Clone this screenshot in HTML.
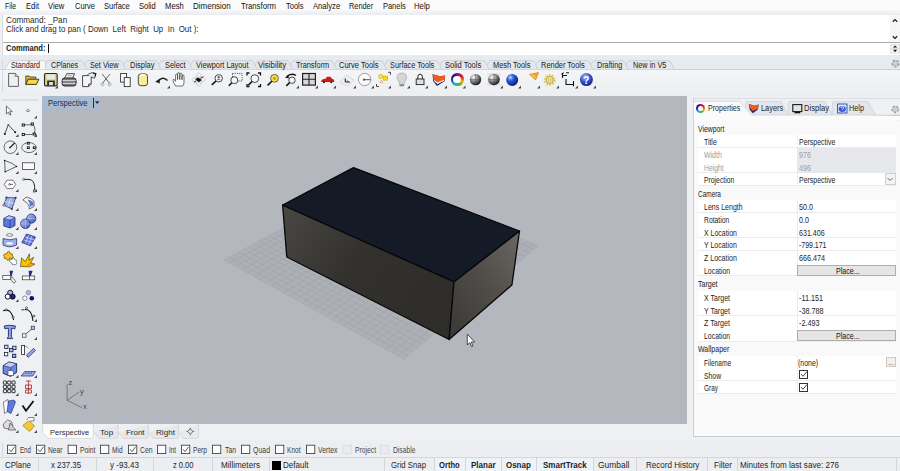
<!DOCTYPE html><html><head><meta charset="utf-8"><style>
html,body{margin:0;padding:0;width:900px;height:471px;overflow:hidden;background:#eef0f3}
body{position:relative;font-family:"Liberation Sans",sans-serif}
body>div{position:absolute}
.t{position:absolute;white-space:pre;line-height:1;font-family:"Liberation Sans",sans-serif}
svg{overflow:visible}
</style></head><body>
<div style="left:0px;top:0px;width:900px;height:11px;background:#fbfbfc;"></div>
<div style="left:0px;top:10px;width:900px;height:5px;background:linear-gradient(#f7f8f9,#e9ebee);"></div>
<span class="t" style="left:5.00px;top:1.59px;font-size:8.6px;color:#111;font-weight:400;transform:scaleX(0.7945);transform-origin:0 0;">File</span>
<span class="t" style="left:25.75px;top:1.59px;font-size:8.6px;color:#111;font-weight:400;transform:scaleX(0.8763);transform-origin:0 0;">Edit</span>
<span class="t" style="left:48.25px;top:1.59px;font-size:8.6px;color:#111;font-weight:400;transform:scaleX(0.8789);transform-origin:0 0;">View</span>
<span class="t" style="left:74.50px;top:1.59px;font-size:8.6px;color:#111;font-weight:400;transform:scaleX(0.8710);transform-origin:0 0;">Curve</span>
<span class="t" style="left:103.75px;top:1.59px;font-size:8.6px;color:#111;font-weight:400;transform:scaleX(0.8691);transform-origin:0 0;">Surface</span>
<span class="t" style="left:138.75px;top:1.59px;font-size:8.6px;color:#111;font-weight:400;transform:scaleX(0.8754);transform-origin:0 0;">Solid</span>
<span class="t" style="left:165.00px;top:1.59px;font-size:8.6px;color:#111;font-weight:400;transform:scaleX(0.8917);transform-origin:0 0;">Mesh</span>
<span class="t" style="left:193.30px;top:1.59px;font-size:8.6px;color:#111;font-weight:400;transform:scaleX(0.9302);transform-origin:0 0;">Dimension</span>
<span class="t" style="left:240.50px;top:1.59px;font-size:8.6px;color:#111;font-weight:400;transform:scaleX(0.9004);transform-origin:0 0;">Transform</span>
<span class="t" style="left:285.80px;top:1.59px;font-size:8.6px;color:#111;font-weight:400;transform:scaleX(0.8715);transform-origin:0 0;">Tools</span>
<span class="t" style="left:312.80px;top:1.59px;font-size:8.6px;color:#111;font-weight:400;transform:scaleX(0.8884);transform-origin:0 0;">Analyze</span>
<span class="t" style="left:349.20px;top:1.59px;font-size:8.6px;color:#111;font-weight:400;transform:scaleX(0.8544);transform-origin:0 0;">Render</span>
<span class="t" style="left:382.50px;top:1.59px;font-size:8.6px;color:#111;font-weight:400;transform:scaleX(0.8664);transform-origin:0 0;">Panels</span>
<span class="t" style="left:414.40px;top:1.59px;font-size:8.6px;color:#111;font-weight:400;transform:scaleX(0.8997);transform-origin:0 0;">Help</span>
<div style="left:2.2px;top:14.6px;width:897.8px;height:40.2px;background:#ffffff;border-left:1px solid #d8dbdf;box-sizing:border-box"></div>
<div style="left:3px;top:41.6px;width:897px;height:1px;background:#a9abae;"></div>
<span class="t" style="left:5.80px;top:15.52px;font-size:8.8px;color:#2a2a2a;font-weight:400;transform:scaleX(0.9267);transform-origin:0 0;">Command: _Pan</span>
<span class="t" style="left:5.80px;top:24.92px;font-size:8.8px;color:#2a2a2a;font-weight:400;transform:scaleX(0.9010);transform-origin:0 0;">Click and drag to pan ( Down&nbsp; Left&nbsp; Right&nbsp; Up&nbsp; In&nbsp; Out ):</span>
<span class="t" style="left:5.80px;top:43.82px;font-size:8.8px;color:#1a1a1a;font-weight:700;transform:scaleX(0.8599);transform-origin:0 0;">Command:</span>
<div style="left:48.3px;top:44px;width:0.9px;height:9px;background:#111;"></div>
<div style="left:890px;top:14.6px;width:10px;height:27px;background:#f6f6f6;"></div>
<svg style="position:absolute;left:890px;top:14px" width="10" height="42"><path d="M2.8 7.8 L5 5.6 L7.2 7.8" stroke="#222" stroke-width="1.3" fill="none"/><path d="M2.8 22.2 L5 24.4 L7.2 22.2" stroke="#222" stroke-width="1.3" fill="none"/><rect x="0.8" y="30.2" width="8.6" height="8.8" fill="#f2f2f2" stroke="#cfcfcf" stroke-width="0.6"/><path d="M0.8 34.6 H9.4" stroke="#cfcfcf" stroke-width="0.6"/><path d="M3 33.6 L5.1 31.4 L7.2 33.6 Z M3 35.8 L5.1 38 L7.2 35.8 Z" fill="#111"/></svg>
<div style="left:0px;top:54.8px;width:900px;height:41.5px;background:#eef0f3;"></div>
<div style="left:0px;top:55.2px;width:900px;height:14px;background:#e7eaee;"></div>
<div style="left:0px;top:69px;width:900px;height:0.8px;background:#cdd1d6;"></div>
<div style="left:0px;top:69.8px;width:900px;height:26.5px;background:linear-gradient(#f3f5f7,#eceef1);"></div>
<div style="left:2px;top:59px;width:1px;height:33px;background:#d5d9de;"></div>
<svg style="position:absolute;left:0;top:54px" width="900" height="17"><path d="M623.7 15.299999999999997 L628.7 6.700000000000003 L668.7 6.700000000000003 Q670.2 6.700000000000003 670.9000000000001 8.200000000000003 L674.2 15.299999999999997" fill="#e4e7eb" stroke="#c3c7cc" stroke-width="0.7"/><path d="M588.25 15.299999999999997 L593.25 6.700000000000003 L622.7 6.700000000000003 Q624.2 6.700000000000003 624.9000000000001 8.200000000000003 L628.2 15.299999999999997" fill="#e4e7eb" stroke="#c3c7cc" stroke-width="0.7"/><path d="M533.25 15.299999999999997 L538.25 6.700000000000003 L587.25 6.700000000000003 Q588.75 6.700000000000003 589.45 8.200000000000003 L592.75 15.299999999999997" fill="#e4e7eb" stroke="#c3c7cc" stroke-width="0.7"/><path d="M484.5 15.299999999999997 L489.5 6.700000000000003 L532.25 6.700000000000003 Q533.75 6.700000000000003 534.45 8.200000000000003 L537.75 15.299999999999997" fill="#e4e7eb" stroke="#c3c7cc" stroke-width="0.7"/><path d="M437.5 15.299999999999997 L442.5 6.700000000000003 L483.5 6.700000000000003 Q485.0 6.700000000000003 485.7 8.200000000000003 L489.0 15.299999999999997" fill="#e4e7eb" stroke="#c3c7cc" stroke-width="0.7"/><path d="M382 15.299999999999997 L387 6.700000000000003 L436.5 6.700000000000003 Q438.0 6.700000000000003 438.7 8.200000000000003 L442.0 15.299999999999997" fill="#e4e7eb" stroke="#c3c7cc" stroke-width="0.7"/><path d="M332 15.299999999999997 L337 6.700000000000003 L381 6.700000000000003 Q382.5 6.700000000000003 383.2 8.200000000000003 L386.5 15.299999999999997" fill="#e4e7eb" stroke="#c3c7cc" stroke-width="0.7"/><path d="M288 15.299999999999997 L293 6.700000000000003 L331 6.700000000000003 Q332.5 6.700000000000003 333.2 8.200000000000003 L336.5 15.299999999999997" fill="#e4e7eb" stroke="#c3c7cc" stroke-width="0.7"/><path d="M252.5 15.299999999999997 L257.5 6.700000000000003 L287 6.700000000000003 Q288.5 6.700000000000003 289.2 8.200000000000003 L292.5 15.299999999999997" fill="#e4e7eb" stroke="#c3c7cc" stroke-width="0.7"/><path d="M188 15.299999999999997 L193 6.700000000000003 L251.5 6.700000000000003 Q253.0 6.700000000000003 253.7 8.200000000000003 L257.0 15.299999999999997" fill="#e4e7eb" stroke="#c3c7cc" stroke-width="0.7"/><path d="M156 15.299999999999997 L161 6.700000000000003 L187 6.700000000000003 Q188.5 6.700000000000003 189.2 8.200000000000003 L192.5 15.299999999999997" fill="#e4e7eb" stroke="#c3c7cc" stroke-width="0.7"/><path d="M121 15.299999999999997 L126 6.700000000000003 L155 6.700000000000003 Q156.5 6.700000000000003 157.2 8.200000000000003 L160.5 15.299999999999997" fill="#e4e7eb" stroke="#c3c7cc" stroke-width="0.7"/><path d="M82 15.299999999999997 L87 6.700000000000003 L120 6.700000000000003 Q121.5 6.700000000000003 122.2 8.200000000000003 L125.5 15.299999999999997" fill="#e4e7eb" stroke="#c3c7cc" stroke-width="0.7"/><path d="M42.5 15.299999999999997 L47.5 6.700000000000003 L81 6.700000000000003 Q82.5 6.700000000000003 83.2 8.200000000000003 L86.5 15.299999999999997" fill="#e4e7eb" stroke="#c3c7cc" stroke-width="0.7"/><path d="M5 15.299999999999997 L10 6.700000000000003 L43.5 6.700000000000003 Q45.5 6.700000000000003 45.5 8.5 L45.5 15.299999999999997" fill="#f7f8f9" stroke="#c3c7cc" stroke-width="0.7"/></svg>
<span class="t" style="left:10.50px;top:60.85px;font-size:8.3px;color:#1a1a1a;font-weight:400;transform:scaleX(0.8606);transform-origin:0 0;">Standard</span>
<span class="t" style="left:51.00px;top:60.85px;font-size:8.3px;color:#1a1a1a;font-weight:400;transform:scaleX(0.8606);transform-origin:0 0;">CPlanes</span>
<span class="t" style="left:89.50px;top:60.85px;font-size:8.3px;color:#1a1a1a;font-weight:400;transform:scaleX(0.8737);transform-origin:0 0;">Set View</span>
<span class="t" style="left:129.50px;top:60.85px;font-size:8.3px;color:#1a1a1a;font-weight:400;transform:scaleX(0.8999);transform-origin:0 0;">Display</span>
<span class="t" style="left:165.00px;top:60.85px;font-size:8.3px;color:#1a1a1a;font-weight:400;transform:scaleX(0.8884);transform-origin:0 0;">Select</span>
<span class="t" style="left:196.25px;top:60.85px;font-size:8.3px;color:#1a1a1a;font-weight:400;transform:scaleX(0.8840);transform-origin:0 0;">Viewport Layout</span>
<span class="t" style="left:258.00px;top:60.85px;font-size:8.3px;color:#1a1a1a;font-weight:400;transform:scaleX(0.9468);transform-origin:0 0;">Visibility</span>
<span class="t" style="left:295.50px;top:60.85px;font-size:8.3px;color:#1a1a1a;font-weight:400;transform:scaleX(0.8863);transform-origin:0 0;">Transform</span>
<span class="t" style="left:339.25px;top:60.85px;font-size:8.3px;color:#1a1a1a;font-weight:400;transform:scaleX(0.9048);transform-origin:0 0;">Curve Tools</span>
<span class="t" style="left:389.50px;top:60.85px;font-size:8.3px;color:#1a1a1a;font-weight:400;transform:scaleX(0.8827);transform-origin:0 0;">Surface Tools</span>
<span class="t" style="left:445.00px;top:60.85px;font-size:8.3px;color:#1a1a1a;font-weight:400;transform:scaleX(0.9061);transform-origin:0 0;">Solid Tools</span>
<span class="t" style="left:492.50px;top:60.85px;font-size:8.3px;color:#1a1a1a;font-weight:400;transform:scaleX(0.8964);transform-origin:0 0;">Mesh Tools</span>
<span class="t" style="left:541.25px;top:60.85px;font-size:8.3px;color:#1a1a1a;font-weight:400;transform:scaleX(0.8972);transform-origin:0 0;">Render Tools</span>
<span class="t" style="left:596.70px;top:60.85px;font-size:8.3px;color:#1a1a1a;font-weight:400;transform:scaleX(0.8709);transform-origin:0 0;">Drafting</span>
<span class="t" style="left:633.30px;top:60.85px;font-size:8.3px;color:#1a1a1a;font-weight:400;transform:scaleX(0.8825);transform-origin:0 0;">New in V5</span>
<svg style="position:absolute;left:890.0px;top:58.0px" width="11.0" height="11.0"><g transform="translate(5.5,5.5)"><circle r="3.2399999999999998" fill="none" stroke="#9a9ea4" stroke-width="1.71" stroke-dasharray="2.025 2.025"/><circle r="2.79" fill="none" stroke="#9a9ea4" stroke-width="0.7"/><circle r="1.125" fill="none" stroke="#9a9ea4" stroke-width="0.7"/></g></svg>
<svg style="position:absolute;left:0;top:0" width="900" height="96"><defs><radialGradient id="gs" cx="0.35" cy="0.3" r="0.75"><stop offset="0" stop-color="#ffffff"/><stop offset="0.45" stop-color="#8a8a8a"/><stop offset="1" stop-color="#101010"/></radialGradient><radialGradient id="bs" cx="0.35" cy="0.3" r="0.75"><stop offset="0" stop-color="#c8d8ff"/><stop offset="0.35" stop-color="#2f5fe0"/><stop offset="1" stop-color="#06186a"/></radialGradient><radialGradient id="hs" cx="0.4" cy="0.3" r="0.8"><stop offset="0" stop-color="#a8c0ff"/><stop offset="0.5" stop-color="#3050c8"/><stop offset="1" stop-color="#101c70"/></radialGradient></defs><path d="M8.6 73.4 H15.3 L18.4 76.5 V86.4 H8.6 Z" fill="#efefef" stroke="#555" stroke-width="0.9"/><path d="M15.3 73.4 V76.5 H18.4" fill="#ddd" stroke="#555" stroke-width="0.7"/><path d="M25.8 84.4 V76 H29.3 L30.3 77 H35.8 V79.2" fill="#d9b830" stroke="#333" stroke-width="0.8"/><path d="M25.8 84.4 L28.2 79.2 H38.8 L36.4 84.4 Z" fill="#f4d84a" stroke="#2a2a10" stroke-width="0.9"/><rect x="44.5" y="73.5" width="12.7" height="12.4" rx="1.2" fill="#d4cc8a" stroke="#2b2b2b" stroke-width="1.1"/><rect x="46.6" y="74.4" width="8.5" height="5" fill="#e9e9e2"/><rect x="47.2" y="80.6" width="7.6" height="5.2" fill="#2b2b2b"/><rect x="49" y="82" width="4" height="3.2" fill="#d9d9d9"/><path d="M58 88.5 L58 85.5 L55 88.5 Z" fill="#4a4a4a"/><path d="M64.5 78.5 L66.8 73.6 H74.6 L72.6 78.5 Z" fill="#e8e8e8" stroke="#333" stroke-width="0.8"/><path d="M68 75.6 H71.5" stroke="#777" stroke-width="0.6"/><rect x="62.1" y="78" width="14" height="8" rx="2.6" fill="#7a7a7a" stroke="#1a1a1a" stroke-width="0.9"/><path d="M62.6 80.6 H75.6 M62.6 83.4 H75.6" stroke="#e8e8e8" stroke-width="0.9"/><path d="M82.6 75.6 H91.2 V84 L88.6 86.6 H82.6 Z" fill="#f4f4f4" stroke="#333" stroke-width="0.9"/><path d="M91.2 84 H88.6 V86.6" fill="none" stroke="#333" stroke-width="0.8"/><path d="M87.5 74.5 L92 72.6 L95.8 73.6 L94.6 78.2 L91 77" fill="#e8e8e8" stroke="#333" stroke-width="0.8"/><path d="M93 73 L95.8 73.6 L95 76.3" fill="none" stroke="#111" stroke-width="1.1"/><path d="M102.3 74.2 L109.6 83.3 M109.8 74.2 L102.4 83.3" stroke="#555" stroke-width="0.9"/><circle cx="102.5" cy="84.3" r="1.4" fill="none" stroke="#999" stroke-width="0.8"/><circle cx="109.6" cy="84.3" r="1.4" fill="none" stroke="#999" stroke-width="0.8"/><rect x="120.6" y="73.5" width="6" height="8.6" fill="#fafafa" stroke="#333" stroke-width="0.9"/><rect x="124.2" y="77.6" width="6" height="9" fill="#fafafa" stroke="#333" stroke-width="0.9"/><rect x="138.3" y="73.9" width="9.2" height="11.8" rx="2.5" fill="#f6ec9c" stroke="#333" stroke-width="0.9"/><ellipse cx="142.9" cy="75" rx="3" ry="1" fill="#fff"/><path d="M158 81.5 Q162.5 75.5 167.5 80.5" fill="none" stroke="#1e1e1e" stroke-width="1.6"/><path d="M155.2 81.8 L159.6 78.8 L159.8 83.4 Z" fill="#1e1e1e"/><path d="M170 88.5 L170 85.5 L167 88.5 Z" fill="#4a4a4a"/><path d="M175.6 86 Q174.2 84 173 80.6 Q172.6 79.2 174 79.4 Q174.8 79.8 175.6 81.4 V75.2 Q175.6 74 176.7 74 Q177.6 74 177.6 75.2 V79.6 V73.8 Q177.6 72.6 178.7 72.6 Q179.8 72.6 179.8 73.8 V79.6 V74.4 Q179.8 73.3 180.9 73.3 Q182 73.3 182 74.4 V79.8 V76 Q182 75 183 75 Q184 75 184 76 V82.2 Q184 84.6 182.6 86 Z" fill="#fff" stroke="#333" stroke-width="0.7"/><ellipse cx="198.7" cy="79.6" rx="6.6" ry="2.6" fill="none" stroke="#c8c8c8" stroke-width="0.8"/><ellipse cx="198.7" cy="79.6" rx="2.6" ry="7" fill="none" stroke="#c8c8c8" stroke-width="0.8"/><path d="M195.2 79.2 L198.2 77.4 L201.8 80 L198.8 82.2 Z" fill="#111"/><path d="M196.2 80.8 L194 82.3 M200.5 78.2 L203.6 76.6" stroke="#111" stroke-width="0.9"/><circle cx="218.7" cy="78.3" r="3.7" fill="#fafafa" stroke="#333" stroke-width="0.9"/><path d="M216 81 L211.8 84.8" stroke="#111" stroke-width="1.6"/><path d="M217.2 77.2 H220.2 M218.7 75.8 V78.6 M217.2 79.6 H220.2" stroke="#333" stroke-width="0.7"/><rect x="232.5" y="73.4" width="9.6" height="7.6" fill="none" stroke="#333" stroke-width="0.8" stroke-dasharray="1.2 1"/><circle cx="234.3" cy="80.2" r="3.5" fill="#f4f4f4" stroke="#333" stroke-width="0.9"/><path d="M231.8 82.8 L228.8 85.8" stroke="#111" stroke-width="1.6"/><path d="M247 75.5 V73 H249.5 M258 73 H260.5 V75.5 M247 84 V86.5 H249.5 M258 86.5 H260.5 V84" fill="none" stroke="#111" stroke-width="1.3"/><circle cx="254.8" cy="78.6" r="3.9" fill="#f8f8f8" stroke="#333" stroke-width="0.9"/><path d="M252 81.5 L248.3 85.3" stroke="#111" stroke-width="1.6"/><circle cx="274.5" cy="78.3" r="3.9" fill="#f3e24a" stroke="#555" stroke-width="0.9"/><circle cx="274.5" cy="78.3" r="1.6" fill="#c9a800"/><path d="M271.8 81.2 L267.6 85.4" stroke="#111" stroke-width="1.6"/><path d="M287 76.5 Q291 72.5 296 75.5" fill="none" stroke="#111" stroke-width="1.4"/><path d="M285 77.5 L288.6 74.8 L288.8 78.4 Z" fill="#111"/><circle cx="292" cy="80.2" r="3.2" fill="#f8f8f8" stroke="#333" stroke-width="0.9"/><path d="M289.6 82.6 L286.3 85.9" stroke="#111" stroke-width="1.5"/><path d="M299 88.5 L299 85.5 L296 88.5 Z" fill="#4a4a4a"/><rect x="302.6" y="73.5" width="12.8" height="11.6" fill="#d8d8d8" stroke="#222" stroke-width="1.2"/><path d="M309 73.5 V85.1 M302.6 79.3 H315.4" stroke="#222" stroke-width="1.1"/><path d="M318 88.5 L318 85.5 L315 88.5 Z" fill="#4a4a4a"/><path d="M321.2 81.5 Q321.2 79.5 323.5 79 L325.5 78.8 L327 76.8 H330.5 L332 78.8 Q334.3 79.2 334.3 81.3 V82 H321.2 Z" fill="#d01818"/><circle cx="324" cy="82.2" r="1" fill="#222"/><circle cx="331.3" cy="82.2" r="1" fill="#222"/><path d="M336 88.5 L336 85.5 L333 88.5 Z" fill="#4a4a4a"/><path d="M339.5 82 L346 75.2 L354 80 L347.5 86.3 Z" fill="#f0f0f0" stroke="#c8c8c8" stroke-width="0.6"/><path d="M345.3 78.5 V82 M345.3 82 H349.5" stroke="#222" stroke-width="1.1"/><path d="M347 80.5 L350 82.5" stroke="#c03030" stroke-width="0.9"/><path d="M356 88.5 L356 85.5 L353 88.5 Z" fill="#4a4a4a"/><circle cx="364.6" cy="79.5" r="6.2" fill="#fbfbfb" stroke="#777" stroke-width="0.7"/><path d="M363.5 79.7 H370.5" stroke="#555" stroke-width="1"/><circle cx="364" cy="79.7" r="1.1" fill="#555"/><path d="M374 88.5 L374 85.5 L371 88.5 Z" fill="#4a4a4a"/><circle cx="380.7" cy="76.5" r="2.2" fill="#f7e23c" stroke="#c9a400" stroke-width="0.5"/><rect x="383.5" y="76" width="4.2" height="4.2" fill="#f5d41a" stroke="#c9a400" stroke-width="0.5"/><path d="M381.5 80.2 L383 82.8 H380 Z" fill="#fff" stroke="#e08040" stroke-width="0.6"/><path d="M376.5 84 V86.5 H379 M388 72.3 H390.5 V74.8" fill="none" stroke="#222" stroke-width="0.8"/><path d="M391 88.5 L391 85.5 L388 88.5 Z" fill="#4a4a4a"/><path d="M401.8 73 Q406.8 73.2 406.6 77.8 Q406.4 80 404.2 82.2 V84.5 H399.4 V82.2 Q397.2 80 397 77.8 Q396.8 73.2 401.8 73 Z" fill="#d6d6d6" stroke="#9c9c9c" stroke-width="0.6"/><rect x="399.6" y="84.3" width="4.4" height="2" fill="#8a8a8a"/><path d="M410 88.5 L410 85.5 L407 88.5 Z" fill="#4a4a4a"/><path d="M417.8 79 V76.8 Q417.8 74.2 420.1 74.2 Q422.4 74.2 422.4 76.8 V79" fill="none" stroke="#222" stroke-width="1"/><rect x="416.2" y="79" width="7.8" height="5.6" fill="#e0e0e0" stroke="#222" stroke-width="0.9"/><path d="M428 88.5 L428 85.5 L425 88.5 Z" fill="#4a4a4a"/><path d="M432.5 74.3 L440 76.2 L445.2 75.5 L444.5 81.2 L437 86 L433.2 81.2 Z" fill="#1c2f7a"/><path d="M432.5 74.3 L440 76.2 L445.2 75.5 L444.5 80.5 L437.5 83.5 L433.6 79.8 Z" fill="#f05a20"/><path d="M434.2 80 L437.6 82.4 L444 79.8 L444 80.8 L437.4 84 L434 81 Z" fill="#fff"/><path d="M447 88.5 L447 85.5 L444 88.5 Z" fill="#4a4a4a"/><circle cx="475.5" cy="79.6" r="5.7" fill="url(#gs)"/><path d="M475.5 74 V85.2 M470 79.6 H481" stroke="#444" stroke-width="0.4"/><rect x="487.6" y="73" width="12.8" height="13" fill="#dcdcdc" opacity="0.6"/><circle cx="493.9" cy="79.5" r="5.8" fill="url(#gs)"/><path d="M493.9 73.8 V85.3 M488.2 79.5 H499.6" stroke="#444" stroke-width="0.4"/><path d="M503 88.5 L503 85.5 L500 88.5 Z" fill="#4a4a4a"/><circle cx="512.2" cy="79.9" r="6" fill="url(#bs)"/><path d="M521 88.5 L521 85.5 L518 88.5 Z" fill="#4a4a4a"/><path d="M529.6 74.3 L538.5 72.6 L535.6 80 Z" fill="#f7a81a" stroke="#b06000" stroke-width="0.5"/><path d="M531.5 74.3 L535.5 78" stroke="#fff4a0" stroke-width="0.8"/><path d="M540 88.5 L540 85.5 L537 88.5 Z" fill="#4a4a4a"/><circle cx="549.7" cy="80" r="4.8" fill="none" stroke="#e7cf55" stroke-width="2.4" stroke-dasharray="1.8 1.2"/><circle cx="549.7" cy="80" r="3.6" fill="#f2e6a0" stroke="#8c7a20" stroke-width="0.6"/><circle cx="549.7" cy="80" r="1.3" fill="#fff" stroke="#8c7a20" stroke-width="0.5"/><path d="M559 88.5 L559 85.5 L556 88.5 Z" fill="#4a4a4a"/><path d="M562.5 73.3 V78 M562.5 75.5 H567 M561.6 74.2 L563.6 72.6 M566 79 V84.5 H573.5 M573.5 81 V86.3 M570.5 84.5 H573" fill="none" stroke="#111" stroke-width="1.1"/><path d="M566 72.8 H569" stroke="#111" stroke-width="1"/><path d="M578 88.5 L578 85.5 L575 88.5 Z" fill="#4a4a4a"/><circle cx="586.4" cy="79.6" r="6.5" fill="url(#hs)"/><text x="586.4" y="83.6" font-family="Liberation Sans" font-weight="700" font-size="10" fill="#fff" text-anchor="middle">?</text><path d="M596 88.5 L596 85.5 L593 88.5 Z" fill="#4a4a4a"/></svg>
<div style="left:450.8px;top:73px;width:12.8px;height:12.8px;border-radius:50%;background:conic-gradient(from 60deg,#e02010,#f0b000,#40b830,#10b8d8,#2030c0,#300060,#b000a0,#e02010)"></div>
<div style="left:453.3px;top:75.5px;width:7.8px;height:7.8px;border-radius:50%;background:#fff"></div>
<svg style="position:absolute;left:0;top:0" width="900" height="96"><path d="M465.5 88.5 L465.5 85.5 L462.5 88.5 Z" fill="#4a4a4a"/></svg>
<div style="left:42px;top:96px;width:645px;height:328.4px;background:#b4b7be;"></div>
<div style="left:42px;top:96px;width:58.3px;height:13px;background:#a9bbd0;"></div>
<span class="t" style="left:48.30px;top:99.09px;font-size:8.6px;color:#1d2b4c;font-weight:400;transform:scaleX(0.8813);transform-origin:0 0;">Perspective</span>
<div style="left:93px;top:98px;width:0.9px;height:10px;background:#1d2b4c;"></div>
<svg style="position:absolute;left:0;top:0" width="900" height="471"><path d="M95 101.3 H99.4 L97.2 104 Z" fill="#1d2b4c"/></svg>
<svg style="position:absolute;left:0;top:0" width="900" height="471"><defs><clipPath id="gc"><path d="M223.4 259.8 L374 179.5 L538.6 245.5 L404 359.5 Z"/></clipPath><linearGradient id="ff" x1="0" y1="0" x2="1" y2="0.5"><stop offset="0" stop-color="#4a4844"/><stop offset="0.5" stop-color="#32312e"/><stop offset="1" stop-color="#2e2d2a"/></linearGradient><linearGradient id="rf" x1="1" y1="0" x2="0" y2="1"><stop offset="0" stop-color="#6b6863"/><stop offset="0.5" stop-color="#4f4c48"/><stop offset="1" stop-color="#393735"/></linearGradient></defs><path d="M223.4 259.8 L374 179.5 L538.6 245.5 L404 359.5 Z" fill="#adb0b7"/><g clip-path="url(#gc)" stroke="#9da0a7" stroke-width="0.5"><line x1="223.4" y1="259.8" x2="404.0" y2="359.5"/><line x1="223.4" y1="259.8" x2="374.0" y2="179.5"/><line x1="228.4" y1="257.1" x2="408.5" y2="355.7"/><line x1="229.4" y1="263.1" x2="379.5" y2="181.7"/><line x1="233.4" y1="254.4" x2="413.0" y2="351.9"/><line x1="235.4" y1="266.4" x2="385.0" y2="183.9"/><line x1="238.5" y1="251.8" x2="417.5" y2="348.1"/><line x1="241.5" y1="269.8" x2="390.5" y2="186.1"/><line x1="243.5" y1="249.1" x2="421.9" y2="344.3"/><line x1="247.5" y1="273.1" x2="395.9" y2="188.3"/><line x1="248.5" y1="246.4" x2="426.4" y2="340.5"/><line x1="253.5" y1="276.4" x2="401.4" y2="190.5"/><line x1="253.5" y1="243.7" x2="430.9" y2="336.7"/><line x1="259.5" y1="279.7" x2="406.9" y2="192.7"/><line x1="258.5" y1="241.1" x2="435.4" y2="332.9"/><line x1="265.5" y1="283.1" x2="412.4" y2="194.9"/><line x1="263.6" y1="238.4" x2="439.9" y2="329.1"/><line x1="271.6" y1="286.4" x2="417.9" y2="197.1"/><line x1="268.6" y1="235.7" x2="444.4" y2="325.3"/><line x1="277.6" y1="289.7" x2="423.4" y2="199.3"/><line x1="273.6" y1="233.0" x2="448.9" y2="321.5"/><line x1="283.6" y1="293.0" x2="428.9" y2="201.5"/><line x1="278.6" y1="230.4" x2="453.4" y2="317.7"/><line x1="289.6" y1="296.4" x2="434.4" y2="203.7"/><line x1="283.6" y1="227.7" x2="457.8" y2="313.9"/><line x1="295.6" y1="299.7" x2="439.8" y2="205.9"/><line x1="288.7" y1="225.0" x2="462.3" y2="310.1"/><line x1="301.7" y1="303.0" x2="445.3" y2="208.1"/><line x1="293.7" y1="222.3" x2="466.8" y2="306.3"/><line x1="307.7" y1="306.3" x2="450.8" y2="210.3"/><line x1="298.7" y1="219.7" x2="471.3" y2="302.5"/><line x1="313.7" y1="309.6" x2="456.3" y2="212.5"/><line x1="303.7" y1="217.0" x2="475.8" y2="298.7"/><line x1="319.7" y1="313.0" x2="461.8" y2="214.7"/><line x1="308.7" y1="214.3" x2="480.3" y2="294.9"/><line x1="325.7" y1="316.3" x2="467.3" y2="216.9"/><line x1="313.8" y1="211.6" x2="484.8" y2="291.1"/><line x1="331.8" y1="319.6" x2="472.8" y2="219.1"/><line x1="318.8" y1="208.9" x2="489.2" y2="287.3"/><line x1="337.8" y1="322.9" x2="478.2" y2="221.3"/><line x1="323.8" y1="206.3" x2="493.7" y2="283.5"/><line x1="343.8" y1="326.3" x2="483.7" y2="223.5"/><line x1="328.8" y1="203.6" x2="498.2" y2="279.7"/><line x1="349.8" y1="329.6" x2="489.2" y2="225.7"/><line x1="333.8" y1="200.9" x2="502.7" y2="275.9"/><line x1="355.8" y1="332.9" x2="494.7" y2="227.9"/><line x1="338.9" y1="198.2" x2="507.2" y2="272.1"/><line x1="361.9" y1="336.2" x2="500.2" y2="230.1"/><line x1="343.9" y1="195.6" x2="511.7" y2="268.3"/><line x1="367.9" y1="339.6" x2="505.7" y2="232.3"/><line x1="348.9" y1="192.9" x2="516.2" y2="264.5"/><line x1="373.9" y1="342.9" x2="511.2" y2="234.5"/><line x1="353.9" y1="190.2" x2="520.7" y2="260.7"/><line x1="379.9" y1="346.2" x2="516.7" y2="236.7"/><line x1="358.9" y1="187.5" x2="525.1" y2="256.9"/><line x1="385.9" y1="349.5" x2="522.1" y2="238.9"/><line x1="364.0" y1="184.9" x2="529.6" y2="253.1"/><line x1="392.0" y1="352.9" x2="527.6" y2="241.1"/><line x1="369.0" y1="182.2" x2="534.1" y2="249.3"/><line x1="398.0" y1="356.2" x2="533.1" y2="243.3"/><line x1="374.0" y1="179.5" x2="538.6" y2="245.5"/><line x1="404.0" y1="359.5" x2="538.6" y2="245.5"/></g><path d="M282.6 205 L454 281.7 L449.1 339.5 L286.8 257 Z" fill="url(#ff)" stroke="#080808" stroke-width="1.3" stroke-linejoin="round"/><path d="M454 281.7 L519.5 231 L511.9 285 L449.1 339.5 Z" fill="url(#rf)" stroke="#080808" stroke-width="1.3" stroke-linejoin="round"/><path d="M353.5 167.6 L519.5 231 L454 281.7 L282.6 205 Z" fill="#151a27" stroke="#080808" stroke-width="1.3" stroke-linejoin="round"/><path d="M467.3 334.2 V345 L469.7 342.6 L471.6 346.6 L473 346 L471.2 342.1 L474.6 342 Z" fill="#fff" stroke="#111" stroke-width="0.7"/><path d="M67.1 384.1 V400.3 L79.2 392 M67.1 400.3 L82 407.6" fill="none" stroke="#5a5c60" stroke-width="0.7"/><text x="68.6" y="384.8" font-family="Liberation Sans" font-size="7.5" fill="#45474b">z</text><text x="80" y="393.6" font-family="Liberation Sans" font-size="7.5" fill="#45474b">y</text><text x="83" y="409" font-family="Liberation Sans" font-size="7.5" fill="#45474b">x</text></svg>
<div style="left:0px;top:96px;width:42px;height:344px;background:#eef0f3;"></div>
<div style="left:2px;top:98.5px;width:36px;height:2px;background:#dcdfe3;"></div>
<svg style="position:absolute;left:0;top:0" width="42" height="471"><defs><linearGradient id="bl" x1="0" y1="0" x2="1" y2="1"><stop offset="0" stop-color="#b8c8ff"/><stop offset="1" stop-color="#3450c0"/></linearGradient></defs><path d="M6.4 106 V114 L8.3 112.2 L9.8 115 L11 114.4 L9.6 111.7 L12.3 111.6 Z" fill="#fff" stroke="#333" stroke-width="0.7"/><ellipse cx="28" cy="110.6" rx="1.6" ry="1" fill="none" stroke="#444" stroke-width="0.6"/><path d="M37 118.6 L37 115.6 L34 118.6 Z" fill="#4a4a4a"/><path d="M4.8 134 L8.3 124.8 L15.2 132.2" fill="none" stroke="#222" stroke-width="0.8"/><circle cx="4.8" cy="134" r="1" fill="#111"/><circle cx="8.3" cy="124.8" r="0.9" fill="#555"/><circle cx="15.2" cy="132.2" r="1" fill="#111"/><path d="M18.5 137 L18.5 134 L15.5 137 Z" fill="#4a4a4a"/><path d="M23.5 124.8 H32 Q35.3 125.6 35 130 Q35 134 32 134.5 H23.5" fill="none" stroke="#333" stroke-width="0.7"/><rect x="22.2" y="124" width="2.2" height="2" fill="#fff" stroke="#111" stroke-width="0.9"/><rect x="31.2" y="123" width="2.2" height="2" fill="#fff" stroke="#111" stroke-width="0.9"/><rect x="22.2" y="133.5" width="2.2" height="2" fill="#fff" stroke="#111" stroke-width="0.9"/><rect x="33.2" y="133" width="2.2" height="2" fill="#fff" stroke="#111" stroke-width="0.9"/><path d="M37 137 L37 134 L34 137 Z" fill="#4a4a4a"/><circle cx="10.4" cy="147.2" r="6.3" fill="none" stroke="#333" stroke-width="0.7"/><path d="M10 147.6 L14.6 143" stroke="#111" stroke-width="1.1"/><circle cx="10" cy="147.6" r="0.8" fill="#111"/><path d="M18.5 155 L18.5 152 L15.5 155 Z" fill="#4a4a4a"/><ellipse cx="29" cy="147.6" rx="7.3" ry="5" fill="none" stroke="#333" stroke-width="0.7"/><rect x="27.3" y="142.3" width="2" height="1.8" fill="#fff" stroke="#111" stroke-width="0.9"/><rect x="27.3" y="146.8" width="2" height="1.8" fill="#fff" stroke="#111" stroke-width="0.9"/><rect x="33.3" y="146.8" width="2" height="1.8" fill="#fff" stroke="#111" stroke-width="0.9"/><path d="M37 155 L37 152 L34 155 Z" fill="#4a4a4a"/><path d="M4.6 160.5 Q13 163 16.5 166.5 L5.2 171.8 Z" fill="none" stroke="#333" stroke-width="0.75"/><circle cx="4.6" cy="160.5" r="0.8" fill="#111"/><circle cx="16.5" cy="166.5" r="0.8" fill="#111"/><circle cx="5.2" cy="171.8" r="0.8" fill="#111"/><path d="M18.5 174 L18.5 171 L15.5 174 Z" fill="#4a4a4a"/><rect x="22.4" y="162.8" width="12" height="6.6" fill="#fafafa" stroke="#333" stroke-width="0.75"/><path d="M37 174 L37 171 L34 174 Z" fill="#4a4a4a"/><path d="M7 180.2 H13 L15.8 184.4 L13 188.6 H7 L4.2 184.4 Z" fill="#fff" stroke="#444" stroke-width="0.7"/><path d="M9.8 184.4 H13" stroke="#333" stroke-width="0.7"/><circle cx="9.6" cy="184.4" r="0.9" fill="none" stroke="#333" stroke-width="0.6"/><path d="M18.5 192 L18.5 189 L15.5 192 Z" fill="#4a4a4a"/><path d="M23.6 179.4 H29 Q34.2 180 34.6 186.5 V190.5" fill="none" stroke="#222" stroke-width="1"/><circle cx="23.6" cy="179.4" r="1" fill="#fff" stroke="#222" stroke-width="0.6"/><rect x="33.6" y="190" width="2" height="2" fill="#fff" stroke="#222" stroke-width="0.6"/><path d="M37 192 L37 189 L34 192 Z" fill="#4a4a4a"/><path d="M6.4 197.6 L15.7 197.8 L11.9 209 L3.8 205.2 Z" fill="#9fb0f0" stroke="#1a1a40" stroke-width="0.7"/><path d="M11 197.7 L7.8 207 M5 201.4 L13.8 203.4" stroke="#e8eeff" stroke-width="0.6"/><circle cx="6.4" cy="197.6" r="1" fill="#333"/><circle cx="15.7" cy="197.8" r="1" fill="#333"/><circle cx="3.8" cy="205.2" r="1.1" fill="#fff" stroke="#222" stroke-width="0.6"/><circle cx="11.9" cy="209" r="1" fill="#333"/><path d="M18.5 211 L18.5 208 L15.5 211 Z" fill="#4a4a4a"/><path d="M22.9 200 Q25 197 27.2 197.1 Q32 198.5 34 201.3 L34 206.4 L29.3 209 Q30 204 22.9 200 Z" fill="#f4f4f4" stroke="#333" stroke-width="0.7"/><path d="M27.5 199.5 Q32 200 33.6 203 L33.6 205.2 Q31.5 206 29.8 207 Q30 202.5 27.5 199.5 Z" fill="#5d78d8"/><path d="M37 211 L37 208 L34 211 Z" fill="#4a4a4a"/><path d="M3.8 218.5 L8.8 215.8 L15 217.5 V225.5 L10 228 L3.8 226 Z" fill="#5a78e0" stroke="#141a40" stroke-width="0.7"/><path d="M3.8 218.5 L8.8 215.8 L15 217.5 L10 220 Z" fill="#b4c4ff" stroke="#141a40" stroke-width="0.4"/><path d="M10 220 V228" stroke="#141a40" stroke-width="0.5"/><path d="M18.5 230 L18.5 227 L15.5 230 Z" fill="#4a4a4a"/><circle cx="31.3" cy="218.6" r="4.6" fill="url(#bl)" stroke="#141a40" stroke-width="0.7"/><circle cx="25.4" cy="223.8" r="4.8" fill="url(#bl)" stroke="#141a40" stroke-width="0.7"/><path d="M21 224 H30 M25.4 219 V228.6 M27 218.6 H35.9" stroke="#e0e6ff" stroke-width="0.4"/><path d="M37 230 L37 227 L34 230 Z" fill="#4a4a4a"/><ellipse cx="9.6" cy="235" rx="3.2" ry="1.3" fill="#fff" stroke="#333" stroke-width="0.6"/><path d="M3 238.6 Q9.6 241 16.6 238.6 V245 Q9.6 248.6 3 245 Z" fill="#98aef0" stroke="#1a2060" stroke-width="0.7"/><ellipse cx="9.6" cy="243.4" rx="4" ry="1.8" fill="#eef2ff" stroke="#6070b0" stroke-width="0.4"/><path d="M18.5 249 L18.5 246 L15.5 249 Z" fill="#4a4a4a"/><path d="M21.8 242.5 L26.5 234 L35.5 237 L30.5 245.8 Z" fill="#5872d8" stroke="#1a2060" stroke-width="0.7"/><path d="M23.5 239.8 L32.8 242.5 M25 237 L34 239.8 M28.5 235.2 L25.5 243.5 M31.8 236.2 L28.5 244.8" stroke="#dfe6ff" stroke-width="0.7"/><path d="M37 249 L37 246 L34 249 Z" fill="#4a4a4a"/><path d="M4.5 254 L7 253.6 L7.5 251.8 Q9 251 10 252 L10.2 253.6 L12.5 254 L12.3 256 Q13.8 256.5 13.2 258 L12 258.6 L9.5 258.2 L9 259.8 Q7.8 261 6.8 259.8 L6.5 258.6 L4 258.3 L4.3 256.5 Q2.8 255.8 3.8 254.8 Z" fill="#f4c418" stroke="#5a4200" stroke-width="0.6"/><path d="M9.8 259.5 L12.4 259.2 L12.6 257.8 Q13.8 257.4 14.4 258.5 L14.4 259.6 L16.6 260.3 L16.2 262.3 Q17.4 263 16.6 264 L15.2 264.6 L12.5 264.8 L12.2 263.4 Q10.8 263.2 10.8 262 L9.6 261.5 Z" fill="#fff" stroke="#444" stroke-width="0.6"/><path d="M20.5 266.5 L21.6 257.8 L25.2 261.5 L29.5 253.8 L29 260.3 L33.8 257.2 L30.6 263 L34.8 264.2 L29.5 266.8 Z" fill="#f7c400" stroke="#3a2a00" stroke-width="0.6"/><path d="M26.5 266.5 L30.3 263.4 L34.6 264.2" fill="none" stroke="#e06800" stroke-width="1"/><path d="M9.6 270.8 H13.2 L10.6 279.5 Z" fill="#1c2f8a"/><rect x="2.8" y="275.6" width="8" height="3.8" fill="#fff" stroke="#333" stroke-width="0.7"/><path d="M10.4 278.6 L12.2 277.2 L15.8 281.6 L13.8 283.2 Z" fill="#fff" stroke="#333" stroke-width="0.7"/><path d="M28.6 270.8 H32.6 L29.6 279.5 Z" fill="#1c2f8a"/><rect x="22.3" y="276" width="12.4" height="3.8" fill="#fff" stroke="#333" stroke-width="0.7"/><path d="M29.6 276 V279.8" stroke="#1c2f8a" stroke-width="0.8"/><circle cx="10.2" cy="292.8" r="2.6" fill="#b0a8f0" stroke="#111" stroke-width="0.9"/><circle cx="7.8" cy="296.6" r="2.6" fill="#fff" stroke="#111" stroke-width="1"/><circle cx="12.6" cy="296.6" r="2.6" fill="#2a1c80" stroke="#111" stroke-width="0.9"/><path d="M18.5 302 L18.5 299 L15.5 302 Z" fill="#4a4a4a"/><circle cx="28.4" cy="292.6" r="2.2" fill="#b8b0f0" stroke="#555" stroke-width="0.5"/><circle cx="24.8" cy="298.2" r="2.2" fill="#fff" stroke="#444" stroke-width="0.6"/><circle cx="31.8" cy="298.2" r="2.3" fill="#10106a"/><path d="M3.2 310.8 Q11 307.5 13.6 320" fill="none" stroke="#111" stroke-width="1.1"/><circle cx="6.3" cy="309.8" r="1" fill="#fff" stroke="#111" stroke-width="0.6"/><circle cx="13.1" cy="317.2" r="1" fill="#fff" stroke="#111" stroke-width="0.6"/><path d="M25 309.6 Q31.5 308.6 33 321" fill="none" stroke="#111" stroke-width="1.1"/><path d="M21.5 309.8 H24.5" stroke="#111" stroke-width="0.9"/><circle cx="26.5" cy="307.8" r="1" fill="#fff" stroke="#111" stroke-width="0.6"/><circle cx="34" cy="316" r="1" fill="#fff" stroke="#111" stroke-width="0.6"/><path d="M37 322 L37 319 L34 322 Z" fill="#4a4a4a"/><path d="M4.2 326 Q9.6 324.5 15.4 326 L14.8 329 L13.6 328.4 H11.4 V336.4 L12.6 338.6 H7.2 L8.4 336.4 V328.4 H6.2 L5 329 Z" fill="#8ea2f0" stroke="#10184a" stroke-width="0.8"/><rect x="22.6" y="333.8" width="3.4" height="3.4" fill="#fff" stroke="#333" stroke-width="0.7"/><rect x="31.2" y="326.2" width="3.4" height="3.4" fill="#b0c0f8" stroke="#333" stroke-width="0.7"/><path d="M26 333.6 L31.2 329.6" stroke="#333" stroke-width="0.7"/><path d="M37 340 L37 337 L34 340 Z" fill="#4a4a4a"/><rect x="4.6" y="345.2" width="3.4" height="3.2" fill="#c8d2ff" stroke="#1a1a40" stroke-width="0.8"/><rect x="12.6" y="346.2" width="3.4" height="3.4" fill="#c8d2ff" stroke="#1a1a40" stroke-width="0.8"/><rect x="9.4" y="348.4" width="3.6" height="3.4" fill="#a8b8f8" stroke="#1a1a40" stroke-width="0.8"/><rect x="4.4" y="352.4" width="3.4" height="3.4" fill="#fff" stroke="#1a1a40" stroke-width="0.8"/><rect x="12.4" y="354.2" width="3.4" height="3.4" fill="#98acf4" stroke="#1a1a40" stroke-width="0.8"/><rect x="21.6" y="345.4" width="3" height="9" fill="#fff" stroke="#222" stroke-width="0.8"/><path d="M24.8 346.4 H26.5 L28.6 348.5" fill="none" stroke="#555" stroke-width="0.6"/><path d="M26.4 355.2 L33.6 348.4 L35.4 350.4 L28.2 357.4 Z" fill="#90a6f0" stroke="#1a2060" stroke-width="0.7"/><path d="M3.2 365.6 L9 362 L16.6 363.8 V372.4 L10.6 376.4 L3.2 373.4 Z" fill="#6a86e8" stroke="#10184a" stroke-width="0.8"/><path d="M3.2 365.6 L9 362 L16.6 363.8 L10.8 367.4 Z" fill="#c4d0ff" stroke="#10184a" stroke-width="0.5"/><path d="M10.8 367.4 V376.4" stroke="#10184a" stroke-width="0.5"/><path d="M8 370.5 H12.5 L13.5 372 V375.5 H8 Z" fill="#fff" stroke="#333" stroke-width="0.6"/><path d="M18.5 378 L18.5 375 L15.5 378 Z" fill="#4a4a4a"/><path d="M21.2 376 L24.6 371.6 H35.6 L32.6 376 Z" fill="#9eb2f0" stroke="#1a2060" stroke-width="0.7"/><path d="M25.2 373.2 H33.2" stroke="#1a2060" stroke-width="0.7" stroke-dasharray="1.6 1"/><path d="M25.5 365.5 V370.5 M28.8 365.5 V370.5 M32 365.5 V370.5" stroke="#f4f4f4" stroke-width="1"/><path d="M37 378 L37 375 L34 378 Z" fill="#4a4a4a"/><rect x="3.4" y="381.0" width="3.1" height="3.1" rx="0.3" fill="#f4f4f4" stroke="#1e1e2e" stroke-width="0.9"/><rect x="7.699999999999999" y="381.0" width="3.1" height="3.1" rx="0.3" fill="#f4f4f4" stroke="#1e1e2e" stroke-width="0.9"/><rect x="12.0" y="381.0" width="3.1" height="3.1" rx="0.3" fill="#f4f4f4" stroke="#1e1e2e" stroke-width="0.9"/><rect x="3.4" y="385.3" width="3.1" height="3.1" rx="0.3" fill="#f4f4f4" stroke="#1e1e2e" stroke-width="0.9"/><rect x="7.699999999999999" y="385.3" width="3.1" height="3.1" rx="0.3" fill="#f4f4f4" stroke="#1e1e2e" stroke-width="0.9"/><rect x="12.0" y="385.3" width="3.1" height="3.1" rx="0.3" fill="#f4f4f4" stroke="#1e1e2e" stroke-width="0.9"/><rect x="3.4" y="389.6" width="3.1" height="3.1" rx="0.3" fill="#f4f4f4" stroke="#1e1e2e" stroke-width="0.9"/><rect x="7.699999999999999" y="389.6" width="3.1" height="3.1" rx="0.3" fill="#f4f4f4" stroke="#1e1e2e" stroke-width="0.9"/><rect x="12.0" y="389.6" width="3.1" height="3.1" rx="0.3" fill="#f4f4f4" stroke="#1e1e2e" stroke-width="0.9"/><path d="M18.5 396 L18.5 393 L15.5 396 Z" fill="#4a4a4a"/><path d="M26 381 H31 M28.4 381 V394 M25.5 385 H31.5 V388.5 H25.5 Z M25.5 390 H31.5 V393 H25.5 Z" fill="none" stroke="#b02020" stroke-width="0.8"/><path d="M37 396 L37 393 L34 396 Z" fill="#4a4a4a"/><path d="M3.5 402 L8 399.5 L9 410.5 L4.5 413.5 Z" fill="#fff" stroke="#333" stroke-width="0.6"/><path d="M8.5 401 L14 400 L15.5 402 L11 413.5 L7 411.5 Z" fill="#5c7ae0" stroke="#1e2a70" stroke-width="0.6"/><path d="M18.5 416 L18.5 413 L15.5 416 Z" fill="#4a4a4a"/><path d="M22.5 405.5 L26 410.8 L33.5 401" fill="none" stroke="#111" stroke-width="1.8"/><path d="M37 416 L37 413 L34 416 Z" fill="#4a4a4a"/><path d="M3.2 424 L7.5 420 L11.5 421.5 L13 426 L8.5 429 L4 428 Z" fill="#e0e0e0" stroke="#333" stroke-width="0.6"/><path d="M10 423 L15.8 430 H8.5 Z" fill="#d0d0d0" stroke="#333" stroke-width="0.6"/><path d="M18.5 433 L18.5 430 L15.5 433 Z" fill="#4a4a4a"/><path d="M22.8 425.5 L29 420.5 L34.5 426 L29.5 431.5 Z" fill="#f2c838" stroke="#8a6a00" stroke-width="0.6"/><path d="M26.5 420 L28.5 417.5 H34 V421 H30" fill="#fff" stroke="#333" stroke-width="0.6"/><path d="M37 433 L37 430 L34 433 Z" fill="#4a4a4a"/></svg>
<div style="left:42px;top:424px;width:650px;height:16px;background:#eef0f3;"></div>
<svg style="position:absolute;left:0;top:0" width="900" height="471"><path d="M198.4 424.4 V436.4 Q198.4 438.4 196.4 438.4 H183.5 L178.8 432.5" fill="#e8eaee" stroke="#c6cace" stroke-width="0.6"/><path d="M178.6 424.4 V436.4 Q178.6 438.4 176.6 438.4 H153.5 L148.4 432.5" fill="#e6e8ec" stroke="#c6cace" stroke-width="0.6"/><path d="M148.3 424.4 V436.4 Q148.3 438.4 146.3 438.4 H123.5 L118.2 432.5" fill="#e6e8ec" stroke="#c6cace" stroke-width="0.6"/><path d="M118 424.4 V436.4 Q118 438.4 116 438.4 H99 L93.5 432" fill="#e6e8ec" stroke="#c6cace" stroke-width="0.6"/><path d="M42.7 424.4 V432.4 L48 438.4 H91.4 Q93.3 438.4 93.3 436.4 V424.4" fill="#fcfcfc" stroke="#c6cace" stroke-width="0.6"/><path d="M187.6 431.5 L190.3 428.8 L193 431.5 L190.3 434.2 Z" fill="none" stroke="#555" stroke-width="0.9"/><path d="M190.3 427.6 V428.8 M190.3 434.2 V435.4 M186.4 431.5 H187.6 M193 431.5 H194.2" stroke="#555" stroke-width="0.8"/></svg>
<span class="t" style="left:49.80px;top:428.60px;font-size:8px;color:#2a2a2a;font-weight:400;transform:scaleX(0.9354);transform-origin:0 0;">Perspective</span>
<span class="t" style="left:100.20px;top:428.60px;font-size:8px;color:#2a2a2a;font-weight:400;transform:scaleX(1.0248);transform-origin:0 0;">Top</span>
<span class="t" style="left:125.70px;top:428.60px;font-size:8px;color:#2a2a2a;font-weight:400;transform:scaleX(0.9904);transform-origin:0 0;">Front</span>
<span class="t" style="left:155.50px;top:428.60px;font-size:8px;color:#2a2a2a;font-weight:400;transform:scaleX(1.0118);transform-origin:0 0;">Right</span>
<div style="left:687px;top:96px;width:5.7px;height:344px;background:#eef0f3;"></div>
<div style="left:692.7px;top:98.2px;width:207.3px;height:338.8px;background:#eef0f3;border-left:1px solid #cbcfd4;border-top:1.5px solid #dadde1;border-bottom:1px solid #c8ccd1;box-sizing:border-box"></div>
<div style="left:693.7px;top:115.1px;width:206.3px;height:0.7px;background:#c9cdd2;"></div>
<svg style="position:absolute;left:0;top:0" width="900" height="471"><path d="M832 115.1 L832.5 103 Q832.8 101.6 834.5 101.6 H868 L875.5 115.1" fill="#e3e6ea" stroke="#c6cace" stroke-width="0.6"/><path d="M787.8 115.1 L788.3 103 Q788.6 101.6 790.3 101.6 H825 L832.4 115.1" fill="#e3e6ea" stroke="#c6cace" stroke-width="0.6"/><path d="M744 115.1 L746 103 Q746.3 101.6 748 101.6 H781 L788 115.1" fill="#e3e6ea" stroke="#c6cace" stroke-width="0.6"/><path d="M693.4 121 V103 Q693.4 101.3 695 101.3 H739.3 L751.8 115.1 H900" fill="#fbfbfb" stroke="#c6cace" stroke-width="0.6"/><path d="M748.8 104 L754.5 105.8 L758.6 104.6 L758 109.5 L752.8 113.3 L749.6 109.5 Z" fill="#1c2f7a"/><path d="M748.8 104 L754.5 105.8 L758.6 104.6 L758 108.8 L753 111 L750 108.3 Z" fill="#f05a20"/><rect x="792.8" y="104.6" width="9" height="7" fill="#e4e4e4" stroke="#1a1a1a" stroke-width="1.1"/><path d="M794.5 112.6 H800.2" stroke="#111" stroke-width="1.4"/><rect x="837.6" y="104" width="9.4" height="9" fill="#dfe6fb" stroke="#2f45a8" stroke-width="0.9"/><ellipse cx="842.3" cy="109" rx="3.6" ry="3" fill="#3a5ad0"/><path d="M841 108 Q841 106.8 842.4 106.8 Q843.8 106.8 843.6 108 Q843.4 108.8 842.4 109.3 V110" fill="none" stroke="#fff" stroke-width="0.8"/></svg>
<div style="left:695.8px;top:103.8px;width:9.5px;height:9.5px;border-radius:50%;background:conic-gradient(from 60deg,#e02010,#f0b000,#40b830,#10b8d8,#2030c0,#300060,#b000a0,#e02010)"></div>
<div style="left:698.3px;top:106.3px;width:4.5px;height:4.5px;border-radius:50%;background:#f4f6f4"></div>
<svg style="position:absolute;left:890.2px;top:104.4px" width="10.6" height="10.6"><g transform="translate(5.3,5.3)"><circle r="3.0959999999999996" fill="none" stroke="#9a9ea4" stroke-width="1.634" stroke-dasharray="1.935 1.935"/><circle r="2.666" fill="none" stroke="#9a9ea4" stroke-width="0.7"/><circle r="1.075" fill="none" stroke="#9a9ea4" stroke-width="0.7"/></g></svg>
<span class="t" style="left:707.80px;top:104.83px;font-size:8.2px;color:#1e1e1e;font-weight:400;transform:scaleX(0.8665);transform-origin:0 0;">Properties</span>
<span class="t" style="left:760.60px;top:104.83px;font-size:8.2px;color:#1e1e1e;font-weight:400;transform:scaleX(0.9024);transform-origin:0 0;">Layers</span>
<span class="t" style="left:803.50px;top:104.83px;font-size:8.2px;color:#1e1e1e;font-weight:400;transform:scaleX(0.9295);transform-origin:0 0;">Display</span>
<span class="t" style="left:848.70px;top:104.83px;font-size:8.2px;color:#1e1e1e;font-weight:400;transform:scaleX(0.8902);transform-origin:0 0;">Help</span>
<div style="left:693.7px;top:115.8px;width:206.3px;height:320.2px;background:#fbfbfb;"></div>
<div style="left:896px;top:120px;width:4px;height:316px;background:#f4f4f5;"></div>
<div style="left:694.4px;top:120.5px;width:205.6px;height:315.5px;background:#f9f9f9;"></div>
<span class="t" style="left:697.60px;top:124.59px;font-size:8.6px;color:#222;font-weight:400;transform:scaleX(0.7922);transform-origin:0 0;">Viewport</span>
<div style="left:697.5px;top:135.0px;width:198.5px;height:12.65px;background:#ffffff;"></div>
<div style="left:697.5px;top:147.05px;width:198.5px;height:0.6px;background:#ececec;"></div>
<div style="left:796.6px;top:135.0px;width:0.6px;height:12.65px;background:#ececec;"></div>
<span class="t" style="left:703.60px;top:138.39px;font-size:8.6px;color:#1e1e1e;font-weight:400;transform:scaleX(0.7982);transform-origin:0 0;">Title</span>
<span class="t" style="left:798.90px;top:138.39px;font-size:8.6px;color:#1e1e1e;font-weight:400;transform:scaleX(0.8101);transform-origin:0 0;">Perspective</span>
<div style="left:697.5px;top:147.65px;width:198.5px;height:12.65px;background:#ffffff;"></div>
<div style="left:697.5px;top:159.70000000000002px;width:198.5px;height:0.6px;background:#ececec;"></div>
<div style="left:796.6px;top:147.65px;width:0.6px;height:12.65px;background:#ececec;"></div>
<span class="t" style="left:703.60px;top:151.04px;font-size:8.6px;color:#9b9b9b;font-weight:400;transform:scaleX(0.8101);transform-origin:0 0;">Width</span>
<div style="left:797.2px;top:147.65px;width:98.8px;height:12.65px;background:#e6e8eb;"></div>
<span class="t" style="left:798.90px;top:151.04px;font-size:8.6px;color:#a0a0a0;font-weight:400;transform:scaleX(0.8400);transform-origin:0 0;">976</span>
<div style="left:697.5px;top:160.3px;width:198.5px;height:12.65px;background:#ffffff;"></div>
<div style="left:697.5px;top:172.35000000000002px;width:198.5px;height:0.6px;background:#ececec;"></div>
<div style="left:796.6px;top:160.3px;width:0.6px;height:12.65px;background:#ececec;"></div>
<span class="t" style="left:703.60px;top:163.69px;font-size:8.6px;color:#9b9b9b;font-weight:400;transform:scaleX(0.7886);transform-origin:0 0;">Height</span>
<div style="left:797.2px;top:160.3px;width:98.8px;height:12.65px;background:#e6e8eb;"></div>
<span class="t" style="left:798.90px;top:163.69px;font-size:8.6px;color:#a0a0a0;font-weight:400;transform:scaleX(0.8400);transform-origin:0 0;">496</span>
<div style="left:697.5px;top:172.95000000000002px;width:198.5px;height:12.65px;background:#ffffff;"></div>
<div style="left:697.5px;top:185.00000000000003px;width:198.5px;height:0.6px;background:#ececec;"></div>
<div style="left:796.6px;top:172.95000000000002px;width:0.6px;height:12.65px;background:#ececec;"></div>
<span class="t" style="left:703.60px;top:176.34px;font-size:8.6px;color:#1e1e1e;font-weight:400;transform:scaleX(0.7926);transform-origin:0 0;">Projection</span>
<span class="t" style="left:798.90px;top:176.34px;font-size:8.6px;color:#1e1e1e;font-weight:400;transform:scaleX(0.8101);transform-origin:0 0;">Perspective</span>
<div style="left:884.5px;top:173.45000000000002px;width:11.3px;height:11.65px;background:#f2f2f2;border:0.6px solid #d0d0d0;box-sizing:border-box"></div>
<svg style="position:absolute;left:884px;top:172.95000000000002px" width="12" height="13"><path d="M3.5 5 L6 7.5 L8.5 5" fill="none" stroke="#444" stroke-width="0.8"/></svg>
<span class="t" style="left:697.60px;top:189.69px;font-size:8.6px;color:#222;font-weight:400;transform:scaleX(0.7512);transform-origin:0 0;">Camera</span>
<div style="left:697.5px;top:200.10000000000002px;width:198.5px;height:12.65px;background:#ffffff;"></div>
<div style="left:697.5px;top:212.15000000000003px;width:198.5px;height:0.6px;background:#ececec;"></div>
<div style="left:796.6px;top:200.10000000000002px;width:0.6px;height:12.65px;background:#ececec;"></div>
<span class="t" style="left:703.60px;top:203.49px;font-size:8.6px;color:#1e1e1e;font-weight:400;transform:scaleX(0.8174);transform-origin:0 0;">Lens Length</span>
<span class="t" style="left:798.90px;top:203.49px;font-size:8.6px;color:#1e1e1e;font-weight:400;transform:scaleX(0.8370);transform-origin:0 0;">50.0</span>
<div style="left:697.5px;top:212.75000000000003px;width:198.5px;height:12.65px;background:#ffffff;"></div>
<div style="left:697.5px;top:224.80000000000004px;width:198.5px;height:0.6px;background:#ececec;"></div>
<div style="left:796.6px;top:212.75000000000003px;width:0.6px;height:12.65px;background:#ececec;"></div>
<span class="t" style="left:703.60px;top:216.14px;font-size:8.6px;color:#1e1e1e;font-weight:400;transform:scaleX(0.7866);transform-origin:0 0;">Rotation</span>
<span class="t" style="left:798.90px;top:216.14px;font-size:8.6px;color:#1e1e1e;font-weight:400;transform:scaleX(0.8400);transform-origin:0 0;">0.0</span>
<div style="left:697.5px;top:225.40000000000003px;width:198.5px;height:12.65px;background:#ffffff;"></div>
<div style="left:697.5px;top:237.45000000000005px;width:198.5px;height:0.6px;background:#ececec;"></div>
<div style="left:796.6px;top:225.40000000000003px;width:0.6px;height:12.65px;background:#ececec;"></div>
<span class="t" style="left:703.60px;top:228.79px;font-size:8.6px;color:#1e1e1e;font-weight:400;transform:scaleX(0.8096);transform-origin:0 0;">X Location</span>
<span class="t" style="left:798.90px;top:228.79px;font-size:8.6px;color:#1e1e1e;font-weight:400;transform:scaleX(0.8267);transform-origin:0 0;">631.406</span>
<div style="left:697.5px;top:238.05000000000004px;width:198.5px;height:12.65px;background:#ffffff;"></div>
<div style="left:697.5px;top:250.10000000000005px;width:198.5px;height:0.6px;background:#ececec;"></div>
<div style="left:796.6px;top:238.05000000000004px;width:0.6px;height:12.65px;background:#ececec;"></div>
<span class="t" style="left:703.60px;top:241.44px;font-size:8.6px;color:#1e1e1e;font-weight:400;transform:scaleX(0.8122);transform-origin:0 0;">Y Location</span>
<span class="t" style="left:798.90px;top:241.44px;font-size:8.6px;color:#1e1e1e;font-weight:400;transform:scaleX(0.8095);transform-origin:0 0;">-799.171</span>
<div style="left:697.5px;top:250.70000000000005px;width:198.5px;height:12.65px;background:#ffffff;"></div>
<div style="left:697.5px;top:262.75px;width:198.5px;height:0.6px;background:#ececec;"></div>
<div style="left:796.6px;top:250.70000000000005px;width:0.6px;height:12.65px;background:#ececec;"></div>
<span class="t" style="left:703.60px;top:254.09px;font-size:8.6px;color:#1e1e1e;font-weight:400;transform:scaleX(0.8192);transform-origin:0 0;">Z Location</span>
<span class="t" style="left:798.90px;top:254.09px;font-size:8.6px;color:#1e1e1e;font-weight:400;transform:scaleX(0.8400);transform-origin:0 0;">666.474</span>
<div style="left:697.5px;top:263.35px;width:198.5px;height:12.65px;background:#ffffff;"></div>
<div style="left:697.5px;top:275.4px;width:198.5px;height:0.6px;background:#ececec;"></div>
<div style="left:796.6px;top:263.35px;width:0.6px;height:12.65px;background:#ececec;"></div>
<span class="t" style="left:703.60px;top:266.74px;font-size:8.6px;color:#1e1e1e;font-weight:400;transform:scaleX(0.8060);transform-origin:0 0;">Location</span>
<div style="left:797px;top:264.55px;width:98.7px;height:11.4px;background:#e5e5e5;border:0.8px solid #adadad;box-sizing:border-box"></div>
<span class="t" style="left:835.70px;top:266.64px;font-size:8.6px;color:#111;font-weight:400;transform:scaleX(0.8228);transform-origin:0 0;">Place...</span>
<span class="t" style="left:697.60px;top:280.09px;font-size:8.6px;color:#222;font-weight:400;transform:scaleX(0.8198);transform-origin:0 0;">Target</span>
<div style="left:697.5px;top:290.5px;width:198.5px;height:12.65px;background:#ffffff;"></div>
<div style="left:697.5px;top:302.54999999999995px;width:198.5px;height:0.6px;background:#ececec;"></div>
<div style="left:796.6px;top:290.5px;width:0.6px;height:12.65px;background:#ececec;"></div>
<span class="t" style="left:703.60px;top:293.89px;font-size:8.6px;color:#1e1e1e;font-weight:400;transform:scaleX(0.8160);transform-origin:0 0;">X Target</span>
<span class="t" style="left:798.90px;top:293.89px;font-size:8.6px;color:#1e1e1e;font-weight:400;transform:scaleX(0.8400);transform-origin:0 0;">-11.151</span>
<div style="left:697.5px;top:303.15px;width:198.5px;height:12.65px;background:#ffffff;"></div>
<div style="left:697.5px;top:315.19999999999993px;width:198.5px;height:0.6px;background:#ececec;"></div>
<div style="left:796.6px;top:303.15px;width:0.6px;height:12.65px;background:#ececec;"></div>
<span class="t" style="left:703.60px;top:306.54px;font-size:8.6px;color:#1e1e1e;font-weight:400;transform:scaleX(0.8193);transform-origin:0 0;">Y Target</span>
<span class="t" style="left:798.90px;top:306.54px;font-size:8.6px;color:#1e1e1e;font-weight:400;transform:scaleX(0.8400);transform-origin:0 0;">-38.788</span>
<div style="left:697.5px;top:315.79999999999995px;width:198.5px;height:12.65px;background:#ffffff;"></div>
<div style="left:697.5px;top:327.8499999999999px;width:198.5px;height:0.6px;background:#ececec;"></div>
<div style="left:796.6px;top:315.79999999999995px;width:0.6px;height:12.65px;background:#ececec;"></div>
<span class="t" style="left:703.60px;top:319.19px;font-size:8.6px;color:#1e1e1e;font-weight:400;transform:scaleX(0.8283);transform-origin:0 0;">Z Target</span>
<span class="t" style="left:798.90px;top:319.19px;font-size:8.6px;color:#1e1e1e;font-weight:400;transform:scaleX(0.8400);transform-origin:0 0;">-2.493</span>
<div style="left:697.5px;top:328.44999999999993px;width:198.5px;height:12.65px;background:#ffffff;"></div>
<div style="left:697.5px;top:340.4999999999999px;width:198.5px;height:0.6px;background:#ececec;"></div>
<div style="left:796.6px;top:328.44999999999993px;width:0.6px;height:12.65px;background:#ececec;"></div>
<span class="t" style="left:703.60px;top:331.84px;font-size:8.6px;color:#1e1e1e;font-weight:400;transform:scaleX(0.8060);transform-origin:0 0;">Location</span>
<div style="left:797px;top:329.6499999999999px;width:98.7px;height:11.4px;background:#e5e5e5;border:0.8px solid #adadad;box-sizing:border-box"></div>
<span class="t" style="left:835.70px;top:331.74px;font-size:8.6px;color:#111;font-weight:400;transform:scaleX(0.8228);transform-origin:0 0;">Place...</span>
<span class="t" style="left:697.60px;top:345.19px;font-size:8.6px;color:#222;font-weight:400;transform:scaleX(0.8151);transform-origin:0 0;">Wallpaper</span>
<div style="left:697.5px;top:355.5999999999999px;width:198.5px;height:12.65px;background:#ffffff;"></div>
<div style="left:697.5px;top:367.64999999999986px;width:198.5px;height:0.6px;background:#ececec;"></div>
<div style="left:796.6px;top:355.5999999999999px;width:0.6px;height:12.65px;background:#ececec;"></div>
<span class="t" style="left:703.60px;top:358.99px;font-size:8.6px;color:#1e1e1e;font-weight:400;transform:scaleX(0.7686);transform-origin:0 0;">Filename</span>
<span class="t" style="left:797.80px;top:358.99px;font-size:8.6px;color:#1e1e1e;font-weight:400;transform:scaleX(0.8127);transform-origin:0 0;">(none)</span>
<div style="left:886px;top:356.7999999999999px;width:10px;height:10.45px;background:#f0f0f0;border:0.6px solid #c8c8c8;box-sizing:border-box"></div>
<span class="t" style="left:888.30px;top:359.67px;font-size:6.5px;color:#333;font-weight:400;">...</span>
<div style="left:697.5px;top:368.2499999999999px;width:198.5px;height:12.65px;background:#ffffff;"></div>
<div style="left:697.5px;top:380.29999999999984px;width:198.5px;height:0.6px;background:#ececec;"></div>
<div style="left:796.6px;top:368.2499999999999px;width:0.6px;height:12.65px;background:#ececec;"></div>
<span class="t" style="left:703.60px;top:371.64px;font-size:8.6px;color:#1e1e1e;font-weight:400;transform:scaleX(0.7938);transform-origin:0 0;">Show</span>
<div style="left:799.4px;top:369.8499999999999px;width:9px;height:9px;background:#fff;border:0.8px solid #333;box-sizing:border-box"></div>
<svg style="position:absolute;left:799px;top:369.4499999999999px" width="10" height="10"><path d="M2 5 L4 7.3 L8 2.5" fill="none" stroke="#333" stroke-width="0.9"/></svg>
<div style="left:697.5px;top:380.89999999999986px;width:198.5px;height:12.65px;background:#ffffff;"></div>
<div style="left:697.5px;top:392.9499999999998px;width:198.5px;height:0.6px;background:#ececec;"></div>
<div style="left:796.6px;top:380.89999999999986px;width:0.6px;height:12.65px;background:#ececec;"></div>
<span class="t" style="left:703.60px;top:384.29px;font-size:8.6px;color:#1e1e1e;font-weight:400;transform:scaleX(0.7519);transform-origin:0 0;">Gray</span>
<div style="left:799.4px;top:382.4999999999999px;width:9px;height:9px;background:#fff;border:0.8px solid #333;box-sizing:border-box"></div>
<svg style="position:absolute;left:799px;top:382.09999999999985px" width="10" height="10"><path d="M2 5 L4 7.3 L8 2.5" fill="none" stroke="#333" stroke-width="0.9"/></svg>
<div style="left:0px;top:440px;width:900px;height:17px;background:#eceef1;"></div>
<div style="left:2.4px;top:443px;width:0.9px;height:12.5px;background:#d3d6da;"></div>
<svg style="position:absolute;left:0;top:0" width="900" height="471"><rect x="7.4" y="445.2" width="8.4" height="8.4" fill="#fcfcfc" stroke="#333" stroke-width="0.8"/><path d="M9 449.3 L11 451.6 L14.6 446.8" fill="none" stroke="#333" stroke-width="0.8"/><rect x="36.4" y="445.2" width="8.4" height="8.4" fill="#fcfcfc" stroke="#333" stroke-width="0.8"/><path d="M38 449.3 L40 451.6 L43.6 446.8" fill="none" stroke="#333" stroke-width="0.8"/><rect x="68.10000000000001" y="445.2" width="8.4" height="8.4" fill="#fcfcfc" stroke="#333" stroke-width="0.8"/><rect x="100.4" y="445.2" width="8.4" height="8.4" fill="#fcfcfc" stroke="#333" stroke-width="0.8"/><rect x="128.4" y="445.2" width="8.4" height="8.4" fill="#fcfcfc" stroke="#333" stroke-width="0.8"/><path d="M130 449.3 L132 451.6 L135.6 446.8" fill="none" stroke="#333" stroke-width="0.8"/><rect x="157.4" y="445.2" width="8.4" height="8.4" fill="#fcfcfc" stroke="#333" stroke-width="0.8"/><rect x="181.4" y="445.2" width="8.4" height="8.4" fill="#fcfcfc" stroke="#333" stroke-width="0.8"/><path d="M183 449.3 L185 451.6 L188.6 446.8" fill="none" stroke="#333" stroke-width="0.8"/><rect x="212.4" y="445.2" width="8.4" height="8.4" fill="#fcfcfc" stroke="#333" stroke-width="0.8"/><rect x="241.4" y="445.2" width="8.4" height="8.4" fill="#fcfcfc" stroke="#333" stroke-width="0.8"/><rect x="275.4" y="445.2" width="8.4" height="8.4" fill="#fcfcfc" stroke="#333" stroke-width="0.8"/><rect x="306.4" y="445.2" width="8.4" height="8.4" fill="#fcfcfc" stroke="#333" stroke-width="0.8"/><rect x="342.9" y="445.2" width="8.4" height="8.4" fill="#e9ebee" stroke="#d6d8dc" stroke-width="0.7"/><rect x="380.4" y="445.2" width="8.4" height="8.4" fill="#e9ebee" stroke="#d6d8dc" stroke-width="0.7"/></svg>
<span class="t" style="left:20.00px;top:446.02px;font-size:8.8px;color:#3c3c3c;font-weight:400;transform:scaleX(0.7022);transform-origin:0 0;">End</span>
<span class="t" style="left:48.00px;top:446.02px;font-size:8.8px;color:#3c3c3c;font-weight:400;transform:scaleX(0.7593);transform-origin:0 0;">Near</span>
<span class="t" style="left:79.50px;top:446.02px;font-size:8.8px;color:#3c3c3c;font-weight:400;transform:scaleX(0.7725);transform-origin:0 0;">Point</span>
<span class="t" style="left:112.00px;top:446.02px;font-size:8.8px;color:#3c3c3c;font-weight:400;transform:scaleX(0.7411);transform-origin:0 0;">Mid</span>
<span class="t" style="left:139.50px;top:446.02px;font-size:8.8px;color:#3c3c3c;font-weight:400;transform:scaleX(0.7741);transform-origin:0 0;">Cen</span>
<span class="t" style="left:169.00px;top:446.02px;font-size:8.8px;color:#3c3c3c;font-weight:400;transform:scaleX(0.7166);transform-origin:0 0;">Int</span>
<span class="t" style="left:193.00px;top:446.02px;font-size:8.8px;color:#3c3c3c;font-weight:400;transform:scaleX(0.7540);transform-origin:0 0;">Perp</span>
<span class="t" style="left:225.00px;top:446.02px;font-size:8.8px;color:#3c3c3c;font-weight:400;transform:scaleX(0.7764);transform-origin:0 0;">Tan</span>
<span class="t" style="left:253.00px;top:446.02px;font-size:8.8px;color:#3c3c3c;font-weight:400;transform:scaleX(0.7901);transform-origin:0 0;">Quad</span>
<span class="t" style="left:287.00px;top:446.02px;font-size:8.8px;color:#3c3c3c;font-weight:400;transform:scaleX(0.7465);transform-origin:0 0;">Knot</span>
<span class="t" style="left:318.00px;top:446.02px;font-size:8.8px;color:#3c3c3c;font-weight:400;transform:scaleX(0.7816);transform-origin:0 0;">Vertex</span>
<span class="t" style="left:354.50px;top:446.02px;font-size:8.8px;color:#4a4a4a;font-weight:400;transform:scaleX(0.7673);transform-origin:0 0;">Project</span>
<span class="t" style="left:392.50px;top:446.02px;font-size:8.8px;color:#4a4a4a;font-weight:400;transform:scaleX(0.7667);transform-origin:0 0;">Disable</span>
<div style="left:0px;top:457px;width:900px;height:14px;background:#eceef1;border-top:0.8px solid #d4d7db;box-sizing:border-box"></div>
<div style="left:433.75px;top:457.8px;width:31.25px;height:13.2px;background:#eef3f9;"></div>
<div style="left:465px;top:457.8px;width:35.75px;height:13.2px;background:#eef3f9;"></div>
<div style="left:500.75px;top:457.8px;width:35.5px;height:13.2px;background:#eef3f9;"></div>
<div style="left:536.25px;top:457.8px;width:56.25px;height:13.2px;background:#eef3f9;"></div>
<div style="left:37.5px;top:457.8px;width:0.8px;height:13.2px;background:#d2d5da;"></div>
<div style="left:95.5px;top:457.8px;width:0.8px;height:13.2px;background:#d2d5da;"></div>
<div style="left:153px;top:457.8px;width:0.8px;height:13.2px;background:#d2d5da;"></div>
<div style="left:212px;top:457.8px;width:0.8px;height:13.2px;background:#d2d5da;"></div>
<div style="left:269px;top:457.8px;width:0.8px;height:13.2px;background:#d2d5da;"></div>
<div style="left:383.75px;top:457.8px;width:0.8px;height:13.2px;background:#d2d5da;"></div>
<div style="left:433.75px;top:457.8px;width:0.8px;height:13.2px;background:#d2d5da;"></div>
<div style="left:465px;top:457.8px;width:0.8px;height:13.2px;background:#d2d5da;"></div>
<div style="left:500.75px;top:457.8px;width:0.8px;height:13.2px;background:#d2d5da;"></div>
<div style="left:536.25px;top:457.8px;width:0.8px;height:13.2px;background:#d2d5da;"></div>
<div style="left:592.5px;top:457.8px;width:0.8px;height:13.2px;background:#d2d5da;"></div>
<div style="left:635.5px;top:457.8px;width:0.8px;height:13.2px;background:#d2d5da;"></div>
<div style="left:707.4px;top:457.8px;width:0.8px;height:13.2px;background:#d2d5da;"></div>
<div style="left:737.4px;top:457.8px;width:0.8px;height:13.2px;background:#d2d5da;"></div>
<div style="left:895.5px;top:457.8px;width:0.8px;height:13.2px;background:#d2d5da;"></div>
<span class="t" style="left:5.00px;top:460.84px;font-size:8.3px;color:#1e1e1e;font-weight:400;transform:scaleX(0.9550);transform-origin:0 0;">CPlane</span>
<span class="t" style="left:51.00px;top:460.84px;font-size:8.3px;color:#1e1e1e;font-weight:400;transform:scaleX(0.9425);transform-origin:0 0;">x 237.35</span>
<span class="t" style="left:110.00px;top:460.84px;font-size:8.3px;color:#1e1e1e;font-weight:400;transform:scaleX(0.9665);transform-origin:0 0;">y -93.43</span>
<span class="t" style="left:172.50px;top:460.84px;font-size:8.3px;color:#1e1e1e;font-weight:400;transform:scaleX(0.9064);transform-origin:0 0;">z 0.00</span>
<span class="t" style="left:221.00px;top:460.84px;font-size:8.3px;color:#1e1e1e;font-weight:400;transform:scaleX(0.9830);transform-origin:0 0;">Millimeters</span>
<span class="t" style="left:282.50px;top:460.84px;font-size:8.3px;color:#1e1e1e;font-weight:400;transform:scaleX(0.9692);transform-origin:0 0;">Default</span>
<span class="t" style="left:391.00px;top:460.84px;font-size:8.3px;color:#1e1e1e;font-weight:400;transform:scaleX(0.9360);transform-origin:0 0;">Grid Snap</span>
<span class="t" style="left:438.75px;top:460.84px;font-size:8.3px;color:#1e1e1e;font-weight:700;transform:scaleX(0.9191);transform-origin:0 0;">Ortho</span>
<span class="t" style="left:470.50px;top:460.84px;font-size:8.3px;color:#1e1e1e;font-weight:700;transform:scaleX(0.9662);transform-origin:0 0;">Planar</span>
<span class="t" style="left:505.75px;top:460.84px;font-size:8.3px;color:#1e1e1e;font-weight:700;transform:scaleX(0.9588);transform-origin:0 0;">Osnap</span>
<span class="t" style="left:542.50px;top:460.84px;font-size:8.3px;color:#1e1e1e;font-weight:700;transform:scaleX(0.9672);transform-origin:0 0;">SmartTrack</span>
<span class="t" style="left:598.00px;top:460.84px;font-size:8.3px;color:#1e1e1e;font-weight:400;transform:scaleX(1.0188);transform-origin:0 0;">Gumball</span>
<span class="t" style="left:645.60px;top:460.84px;font-size:8.3px;color:#1e1e1e;font-weight:400;transform:scaleX(0.9726);transform-origin:0 0;">Record History</span>
<span class="t" style="left:714.00px;top:460.84px;font-size:8.3px;color:#1e1e1e;font-weight:400;transform:scaleX(0.9769);transform-origin:0 0;">Filter</span>
<span class="t" style="left:739.50px;top:460.84px;font-size:8.3px;color:#1e1e1e;font-weight:400;transform:scaleX(0.9753);transform-origin:0 0;">Minutes from last save: 276</span>
<div style="left:272px;top:461px;width:9px;height:8.5px;background:#000;"></div>
</body></html>
